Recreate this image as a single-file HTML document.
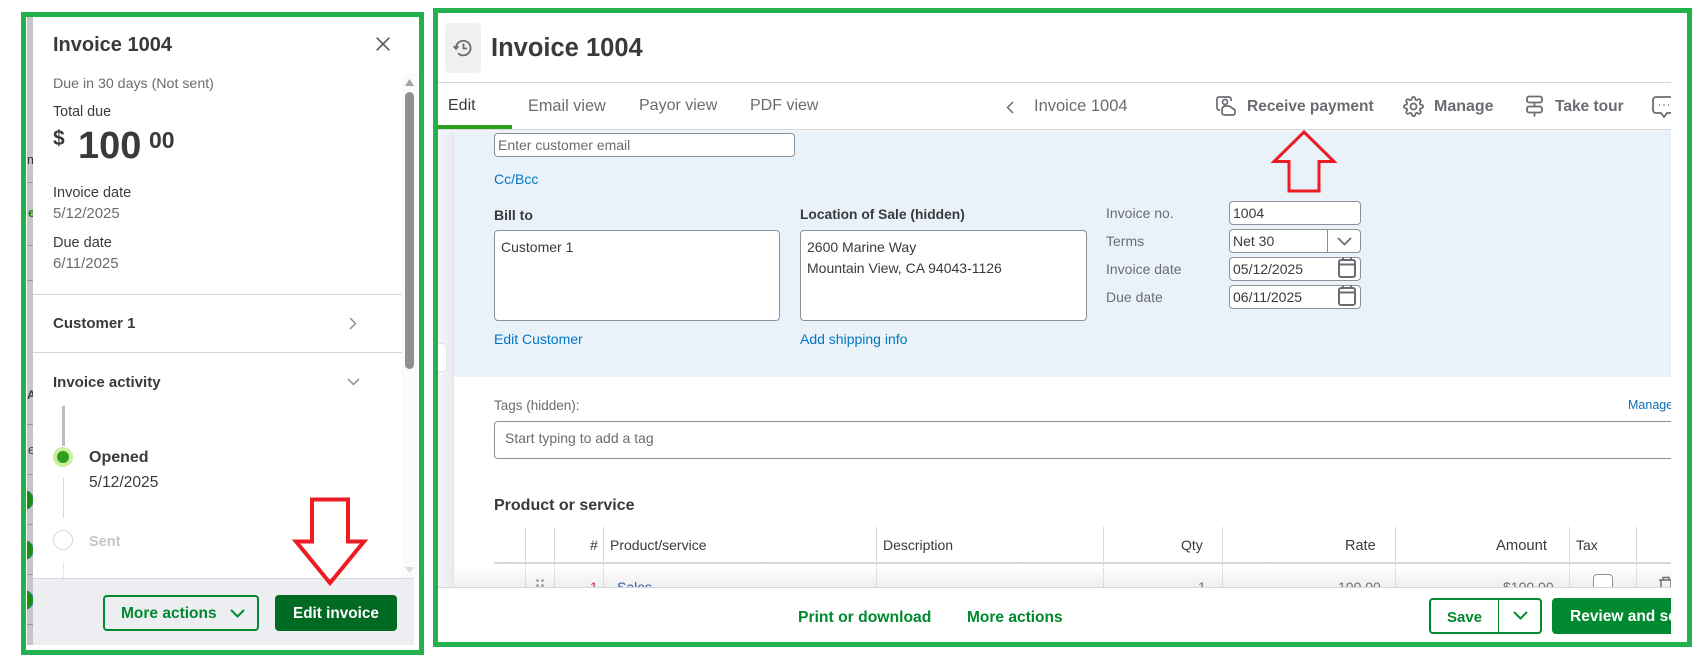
<!DOCTYPE html>
<html lang="en"><head><meta charset="utf-8"><title>Invoice 1004</title>
<style>
html,body{margin:0;padding:0;background:#fff}
#p{position:relative;width:1703px;height:661px;overflow:hidden;background:#fff;font-family:"Liberation Sans",sans-serif;color:#393a3d}
#p div,#p span,#p svg{position:absolute;box-sizing:border-box}
.t{white-space:nowrap;line-height:20px;height:20px;font-size:14px}
.b{font-weight:bold}
.g{color:#6b6c72}
.l{color:#0077c5}
.gr{color:#00892e;font-weight:bold}
.inp{background:#fff;border:1px solid #8d9096;border-radius:4px}
.v{width:1px;top:527px;height:35px;background:#d4d7dc}
.d{width:0;top:564px;height:23px;border-left:1px dotted #c4c6ca}
.sl{left:27px;width:6px;height:1px;background:#9a9a9a}
.gc{left:13px;width:20px;height:20px;border-radius:50%;background:#1f8a14;box-shadow:1px 0 0 #3a8fb0}
</style></head><body>
<div id="p">
<!-- LEFT PANEL -->
<div style="left:26px;top:17px;width:393px;height:633px;overflow:hidden;background:#fff"></div>
<div style="left:27px;top:17px;width:6px;height:628px;background:#c6c6c6"></div>
<div class="sl" style="top:182px"></div><div class="sl" style="top:245px"></div><div class="sl" style="top:280px"></div>
<div class="sl" style="top:424px"></div><div class="sl" style="top:474px"></div><div class="sl" style="top:524px"></div><div class="sl" style="top:574px"></div><div class="sl" style="top:624px"></div>
<div style="left:27px;top:490px;width:6px;height:120px;overflow:hidden">
  <div class="gc" style="left:-14px;top:0"></div><div class="gc" style="left:-14px;top:50px"></div><div class="gc" style="left:-14px;top:100px"></div>
</div>
<span class="t" style="left:27px;top:150px;width:6px;overflow:hidden;color:#333;font-size:13px">m</span>
<span class="t b" style="left:28px;top:203px;width:5px;overflow:hidden;color:#108000;font-size:13px">e</span>
<span class="t b" style="left:27px;top:385px;width:6px;overflow:hidden;font-size:12px">A</span>
<span class="t" style="left:28px;top:440px;width:5px;overflow:hidden;font-size:13px">e</span>

<span class="t b" style="left:53px;top:35px;font-size:20px">Invoice 1004</span>
<svg style="left:376px;top:37px" width="14" height="14" viewBox="0 0 14 14"><path d="M.7.7l12.6 12.6M13.3.7L.7 13.3" stroke="#5f6066" stroke-width="1.7" fill="none"/></svg>
<span class="t g" style="left:53px;top:74px;font-size:14.2px">Due in 30 days (Not sent)</span>
<span class="t" style="left:53px;top:102px;font-size:14.3px">Total due</span>
<span class="t b" style="left:53px;top:129px;font-size:21px">$</span>
<span class="t b" style="left:78px;top:133px;font-size:38px;line-height:26px;height:26px">100</span>
<span class="t b" style="left:149px;top:130px;font-size:23px">00</span>
<span class="t" style="left:53px;top:183px;font-size:14.5px">Invoice date</span>
<span class="t g" style="left:53px;top:204px;font-size:15px">5/12/2025</span>
<span class="t" style="left:53px;top:233px;font-size:14.5px">Due date</span>
<span class="t g" style="left:53px;top:254px;font-size:15px">6/11/2025</span>
<div style="left:33px;top:294px;width:369px;height:1px;background:#d4d7dc"></div>
<span class="t b" style="left:53px;top:314px;font-size:15px">Customer 1</span>
<svg style="left:349px;top:317px" width="8" height="13" viewBox="0 0 8 13"><path d="M1 1l5.5 5.5L1 12" stroke="#8d9096" stroke-width="1.5" fill="none"/></svg>
<!-- scrollbar -->
<div style="left:402px;top:74px;width:15px;height:504px;background:#fbfbfb"></div>
<svg style="left:405px;top:79px" width="9" height="7" viewBox="0 0 9 7"><path d="M4.5 0L9 7H0z" fill="#a3a3a3"/></svg>
<div style="left:405px;top:92px;width:9px;height:277px;background:#909090;border-radius:5px"></div>
<svg style="left:405px;top:567px" width="9" height="6" viewBox="0 0 9 6"><path d="M0 0h9L4.5 6z" fill="#dcdcdc"/></svg>
<div style="left:33px;top:352px;width:369px;height:1px;background:#d4d7dc"></div>
<span class="t b" style="left:53px;top:373px;font-size:15px">Invoice activity</span>
<svg style="left:347px;top:378px" width="13" height="8" viewBox="0 0 13 8"><path d="M1 1l5.5 5.5L12 1" stroke="#8d9096" stroke-width="1.5" fill="none"/></svg>
<div style="left:62px;top:406px;width:3px;height:40px;background:#babec5"></div>
<div style="left:53px;top:447px;width:20px;height:20px;border-radius:50%;background:#cbef9f"></div>
<div style="left:57px;top:451px;width:12px;height:12px;border-radius:50%;background:#2ca01c"></div>
<span class="t b" style="left:89px;top:448px;font-size:16px">Opened</span>
<span class="t" style="left:89px;top:473px;font-size:15.6px">5/12/2025</span>
<div style="left:63px;top:478px;width:1px;height:40px;background:#d8d9dc"></div>
<div style="left:53px;top:530px;width:20px;height:20px;border-radius:50%;border:1px solid #d4d7dc;background:#fff"></div>
<span class="t b" style="left:89px;top:532px;font-size:14.5px;color:#c4c6ca">Sent</span>
<div style="left:63px;top:562px;width:1px;height:16px;background:#e6e7e9"></div>
<!-- left footer -->
<div style="left:33px;top:578px;width:381px;height:67px;background:#eceef1;border-top:1px solid #d4d7dc"></div>
<div style="left:103px;top:595px;width:156px;height:36px;border:2px solid #00892e;border-radius:4px"></div>
<span class="t gr" style="left:121px;top:604px;font-size:15.5px">More actions</span>
<svg style="left:230px;top:609px" width="15" height="9" viewBox="0 0 15 9"><path d="M1 1l6.5 6.5L14 1" stroke="#00892e" stroke-width="2" fill="none"/></svg>
<div style="left:275px;top:595px;width:122px;height:36px;background:#006a23;border-radius:4px"></div>
<span class="t b" style="left:293px;top:604px;font-size:15.3px;color:#fff">Edit invoice</span>

<!-- RIGHT PANEL -->
<div style="left:438px;top:13px;width:1233px;height:119px;background:#fff"></div>
<div style="left:445px;top:23px;width:36px;height:50px;background:#f0f0f0;border-radius:5px"></div>
<svg style="left:453px;top:38px" width="20" height="20" viewBox="0 0 20 20" fill="none" stroke="#6b6c72" stroke-width="1.8"><path d="M3 10a7.3 7.3 0 1 1 2.2 5.3"/><path d="M10.5 5.5V10.5H14"/><path d="M.6 8.2L3 11l2.5-2.8" stroke-width="1.6"/></svg>
<span class="t b" style="left:491px;top:38px;font-size:25.5px">Invoice 1004</span>
<div style="left:438px;top:82px;width:1233px;height:1px;background:#d4d7dc"></div>
<span class="t" style="left:448px;top:96px;font-size:16px">Edit</span>
<span class="t g" style="left:528px;top:96px;font-size:16.3px">Email view</span>
<span class="t g" style="left:639px;top:96px;font-size:16px">Payor view</span>
<span class="t g" style="left:750px;top:96px;font-size:16px">PDF view</span>
<div style="left:438px;top:125px;width:74px;height:4px;background:#2ca01c"></div>
<svg style="left:1006px;top:101px" width="8" height="13" viewBox="0 0 8 13"><path d="M7 1L1.5 6.5 7 12" stroke="#6b6c72" stroke-width="1.5" fill="none"/></svg>
<span class="t g" style="left:1034px;top:96px;font-size:16.5px">Invoice 1004</span>
<svg style="left:1216px;top:96px" width="21" height="21" viewBox="0 0 21 21" fill="none" stroke="#6b6c72" stroke-width="1.7" stroke-linejoin="round"><path d="M4 14H3a2 2 0 0 1-2-2V3a2 2 0 0 1 2-2h10a2 2 0 0 1 2 2v2"/><circle cx="9" cy="6" r="2.5"/><path d="M6 14c0-3 1.5-4 4-4h3l6 4v3a2 2 0 0 1-2 2H9c-2 0-3-1-3-2.5z"/></svg>
<span class="t b g" style="left:1247px;top:97px;font-size:15.5px">Receive payment</span>
<svg style="left:1403px;top:96px" width="21" height="21" viewBox="0 0 24 24" fill="none" stroke="#6b6c72" stroke-width="2"><circle cx="12" cy="12" r="3.5"/><path d="M19.4 15a1.65 1.65 0 0 0 .33 1.82l.06.06a2 2 0 0 1 0 2.83 2 2 0 0 1-2.83 0l-.06-.06a1.65 1.65 0 0 0-1.82-.33 1.65 1.65 0 0 0-1 1.51V21a2 2 0 0 1-2 2 2 2 0 0 1-2-2v-.09A1.65 1.65 0 0 0 9 19.4a1.65 1.65 0 0 0-1.82.33l-.06.06a2 2 0 0 1-2.83 0 2 2 0 0 1 0-2.83l.06-.06a1.65 1.65 0 0 0 .33-1.82 1.65 1.65 0 0 0-1.51-1H3a2 2 0 0 1-2-2 2 2 0 0 1 2-2h.09A1.65 1.65 0 0 0 4.6 9a1.65 1.65 0 0 0-.33-1.82l-.06-.06a2 2 0 0 1 0-2.83 2 2 0 0 1 2.83 0l.06.06a1.65 1.65 0 0 0 1.82.33H9a1.65 1.65 0 0 0 1-1.51V3a2 2 0 0 1 2-2 2 2 0 0 1 2 2v.09a1.65 1.65 0 0 0 1 1.51 1.65 1.65 0 0 0 1.82-.33l.06-.06a2 2 0 0 1 2.83 0 2 2 0 0 1 0 2.83l-.06.06a1.65 1.65 0 0 0-.33 1.82V9a1.65 1.65 0 0 0 1.51 1H21a2 2 0 0 1 2 2 2 2 0 0 1-2 2h-.09a1.65 1.65 0 0 0-1.51 1z"/></svg>
<span class="t b g" style="left:1434px;top:97px;font-size:16px">Manage</span>
<svg style="left:1525px;top:95px" width="19" height="23" viewBox="0 0 19 23" fill="none" stroke="#6b6c72" stroke-width="1.8"><rect x="2" y="1.5" width="15" height="6" rx="2"/><rect x="2" y="11.5" width="15" height="6" rx="2"/><path d="M9.5 7.5v4M9.5 17.5v4"/></svg>
<span class="t b g" style="left:1555px;top:97px;font-size:15.5px">Take tour</span>
<div style="left:1652px;top:94px;width:19px;height:26px;overflow:hidden">
<svg style="left:0;top:0" width="24" height="26" viewBox="0 0 24 26" fill="none" stroke="#6b6c72" stroke-width="1.8"><path d="M4 3h16a3 3 0 0 1 3 3v10a3 3 0 0 1-3 3h-5l-3 4-3-4H4a3 3 0 0 1-3-3V6a3 3 0 0 1 3-3z"/><path d="M7 11h1M11.5 11h1M16 11h1" stroke-width="1.5"/></svg>
</div>
<div style="left:438px;top:129px;width:1233px;height:1px;background:#d4d7dc"></div>
<!-- body -->
<div style="left:438px;top:130px;width:1233px;height:2px;background:#f1f3f6"></div>
<div style="left:438px;top:132px;width:16px;height:455px;background:linear-gradient(90deg,#f4f5f8,#e9ebf0);border-right:1px solid #dfe1e6"></div>
<div style="left:454px;top:132px;width:1217px;height:245px;background:#eaf2f9"></div>
<div style="left:438px;top:343px;width:9px;height:29px;background:#fff;border:1px solid #dfe1e5;border-left:0;border-radius:0 4px 4px 0"></div>
<div class="inp" style="left:494px;top:133px;width:301px;height:24px"></div>
<span class="t g" style="left:498px;top:135px">Enter customer email</span>
<span class="t l" style="left:494px;top:169px">Cc/Bcc</span>
<span class="t b" style="left:494px;top:205px">Bill to</span>
<span class="t b" style="left:800px;top:205px;font-size:13.8px">Location of Sale (hidden)</span>
<div class="inp" style="left:494px;top:230px;width:286px;height:91px"></div>
<div class="inp" style="left:800px;top:230px;width:287px;height:91px"></div>
<span class="t" style="left:501px;top:237px">Customer 1</span>
<span class="t" style="left:807px;top:237px">2600 Marine Way</span>
<span class="t" style="left:807px;top:258px">Mountain View, CA 94043-1126</span>
<span class="t l" style="left:494px;top:329px">Edit Customer</span>
<span class="t l" style="left:800px;top:329px">Add shipping info</span>
<span class="t g" style="left:1106px;top:203px">Invoice no.</span>
<span class="t g" style="left:1106px;top:231px">Terms</span>
<span class="t g" style="left:1106px;top:259px">Invoice date</span>
<span class="t g" style="left:1106px;top:287px">Due date</span>
<div class="inp" style="left:1229px;top:201px;width:132px;height:24px"></div>
<div class="inp" style="left:1229px;top:229px;width:132px;height:24px"></div>
<div class="inp" style="left:1229px;top:257px;width:132px;height:24px"></div>
<div class="inp" style="left:1229px;top:285px;width:132px;height:24px"></div>
<span class="t" style="left:1233px;top:203px">1004</span>
<span class="t" style="left:1233px;top:231px">Net 30</span>
<span class="t" style="left:1233px;top:259px">05/12/2025</span>
<span class="t" style="left:1233px;top:287px">06/11/2025</span>
<div style="left:1327px;top:229px;width:1px;height:24px;background:#8d9096"></div>
<svg style="left:1337px;top:237px" width="15" height="9" viewBox="0 0 15 9"><path d="M1 1l6.5 6.5L14 1" stroke="#6b6c72" stroke-width="1.7" fill="none"/></svg>
<svg style="left:1338px;top:257px" width="18" height="21" viewBox="0 0 18 21" fill="none" stroke="#6b6c72" stroke-width="2"><rect x="1" y="3" width="16" height="17" rx="2"/><path d="M1 7.5h16M5 .5v3M13 .5v3"/></svg>
<svg style="left:1338px;top:285px" width="18" height="21" viewBox="0 0 18 21" fill="none" stroke="#6b6c72" stroke-width="2"><rect x="1" y="3" width="16" height="17" rx="2"/><path d="M1 7.5h16M5 .5v3M13 .5v3"/></svg>
<span class="t g" style="left:494px;top:396px;font-size:13.5px">Tags (hidden):</span>
<span class="t" style="left:1628px;top:395px;font-size:12.5px;color:#0b6eb8;width:43px;overflow:hidden">Manage</span>
<div style="left:494px;top:421px;width:1190px;height:38px;background:#fff;border:1px solid #8d9096;border-radius:4px"></div>
<span class="t g" style="left:505px;top:428px">Start typing to add a tag</span>
<span class="t b" style="left:494px;top:496px;font-size:16px">Product or service</span>
<!-- table -->
<div class="v" style="left:525px"></div><div class="v" style="left:554px"></div><div class="v" style="left:603px"></div><div class="v" style="left:876px"></div><div class="v" style="left:1103px"></div><div class="v" style="left:1222px"></div><div class="v" style="left:1395px"></div><div class="v" style="left:1569px"></div><div class="v" style="left:1636px"></div>
<div style="left:494px;top:562px;width:1177px;height:2px;background:#d4d7dc"></div>
<span class="t" style="left:590px;top:535px">#</span>
<span class="t" style="left:610px;top:535px">Product/service</span>
<span class="t" style="left:883px;top:535px">Description</span>
<span class="t" style="left:1181px;top:535px">Qty</span>
<span class="t" style="left:1345px;top:536px;font-size:14.5px">Rate</span>
<span class="t" style="left:1496px;top:536px;font-size:14.8px">Amount</span>
<span class="t" style="left:1576px;top:535px">Tax</span>
<div style="left:454px;top:566px;width:1217px;height:21px;background:linear-gradient(180deg,#fff,#efeff1)"></div>
<div class="d" style="left:525px"></div><div class="d" style="left:554px"></div><div class="d" style="left:603px"></div><div class="d" style="left:876px"></div><div class="d" style="left:1103px"></div><div class="d" style="left:1222px"></div><div class="d" style="left:1395px"></div><div class="d" style="left:1569px"></div><div class="d" style="left:1636px"></div>
<span class="t" style="left:590px;top:577px;color:#c33">1</span>
<span class="t" style="left:617px;top:577px;color:#2d5f9a">Sales</span>
<span class="t g" style="left:1198px;top:577px">1</span>
<span class="t g" style="left:1338px;top:577px">100.00</span>
<span class="t g" style="left:1503px;top:577px">$100.00</span>
<div style="left:1593px;top:574px;width:20px;height:22px;border:1px solid #8d9096;border-radius:4px;background:#fff"></div>
<svg style="left:536px;top:579px" width="8" height="8" viewBox="0 0 8 8" fill="#8d9096"><circle cx="1.5" cy="1.5" r="1.3"/><circle cx="6.5" cy="1.5" r="1.3"/><circle cx="1.5" cy="6.5" r="1.3"/><circle cx="6.5" cy="6.5" r="1.3"/></svg>
<div style="left:1658px;top:576px;width:13px;height:14px;overflow:hidden"><svg style="left:0;top:0" width="16" height="14" viewBox="0 0 16 14" fill="none" stroke="#6b6c72" stroke-width="1.4"><path d="M1 4h14M5 4V1.500h6V4M3 4v10M13 4v10"/></svg></div>
<!-- right footer -->
<div style="left:438px;top:587px;width:1233px;height:55px;background:#fff;border-top:1px solid #d4d7dc"></div>
<span class="t gr" style="left:798px;top:608px;font-size:15.7px">Print or download</span>
<span class="t gr" style="left:967px;top:608px;font-size:15.5px">More actions</span>
<div style="left:1429px;top:598px;width:113px;height:36px;border:2px solid #00892e;border-radius:4px"></div>
<div style="left:1498px;top:598px;width:1px;height:36px;background:#00892e"></div>
<span class="t gr" style="left:1447px;top:608px;font-size:15px">Save</span>
<svg style="left:1513px;top:611px" width="15" height="9" viewBox="0 0 15 9"><path d="M1 1l6.5 6.5L14 1" stroke="#00892e" stroke-width="2" fill="none"/></svg>
<div style="left:1552px;top:598px;width:119px;height:36px;overflow:hidden;background:#00892e;border-radius:4px 0 0 4px">
<span class="t b" style="left:18px;top:9px;font-size:15.5px;color:#fff">Review and send</span></div>
<!-- right gutter -->
<div style="left:1671px;top:13px;width:16px;height:629px;background:#fff"></div>
<!-- frames -->
<div style="left:21px;top:12px;width:403px;height:643px;border:5px solid #22b14c"></div>
<div style="left:433px;top:8px;width:1259px;height:639px;border:5px solid #22b14c"></div>
<!-- arrows -->
<svg style="left:0;top:0" width="1703" height="661" viewBox="0 0 1703 661" fill="none" stroke="#ed1c24" stroke-width="4" stroke-linejoin="miter"><path d="M312 499.500H348V541.500H364L330 583 296 541.500H312Z"/><path d="M1304 132L1334 161.500H1319V191H1289V161.500H1274Z" stroke-width="3"/></svg>
</div>
</body></html>
